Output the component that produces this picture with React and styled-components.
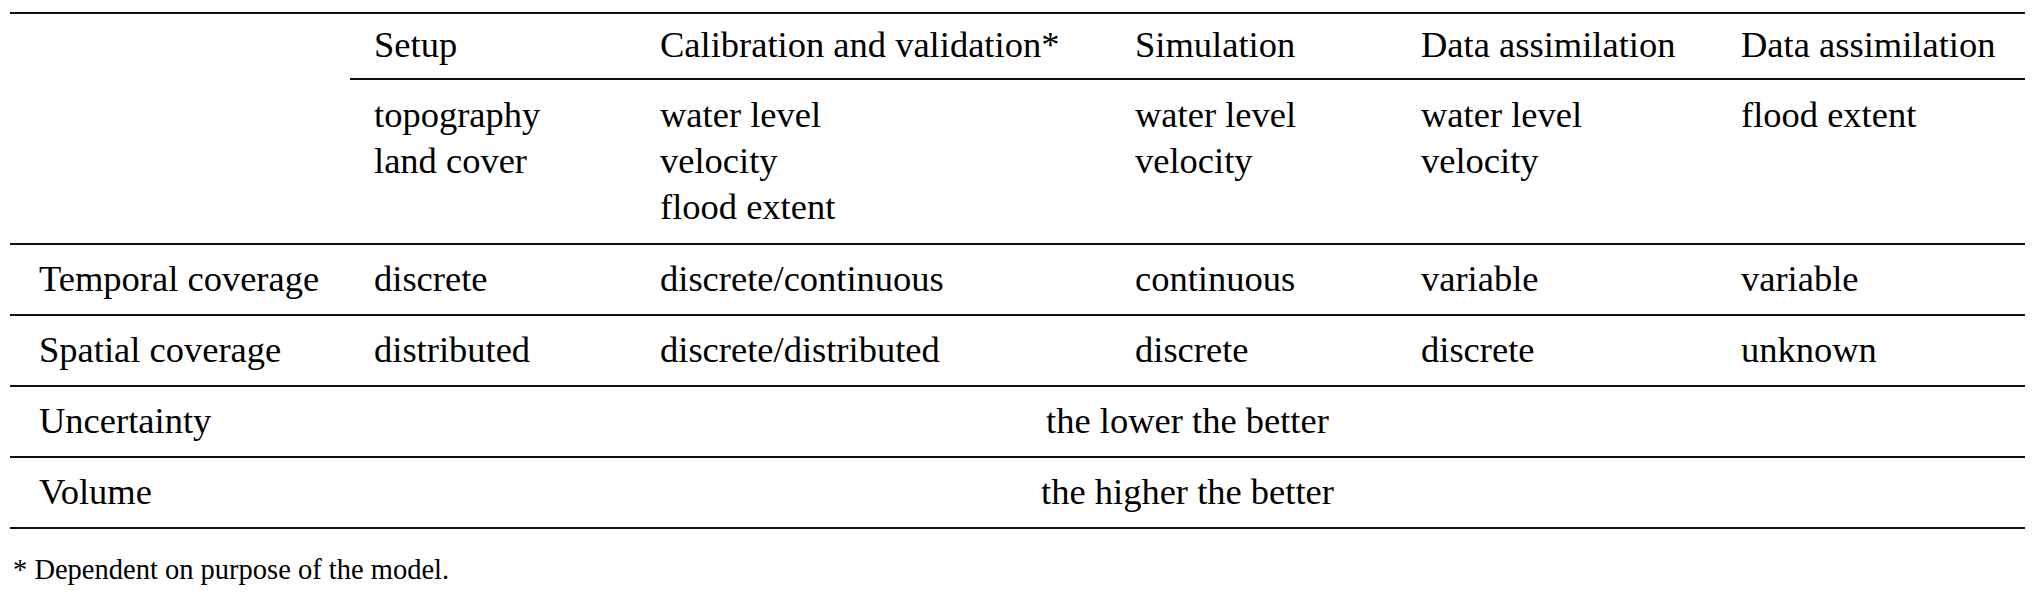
import React from 'react';
import styled, { createGlobalStyle } from 'styled-components';

const GlobalStyle = createGlobalStyle`
    html, body {
        margin: 0;
        padding: 0;
        background: #fff;
    }
    body {
        font-family: "Liberation Serif", "Times New Roman", serif;
        color: #000;
    }
`

const columns = [340, 286, 475, 286, 320, 308];

const headers = [
    'Setup',
    'Calibration and validation*',
    'Simulation',
    'Data assimilation',
    'Data assimilation',
];

const variables = [
    ['topography', 'land cover'],
    ['water level', 'velocity', 'flood extent'],
    ['water level', 'velocity'],
    ['water level', 'velocity'],
    ['flood extent'],
];

const coverage = [
    ['Temporal coverage', 'discrete', 'discrete/continuous', 'continuous', 'variable', 'variable'],
    ['Spatial coverage', 'distributed', 'discrete/distributed', 'discrete', 'discrete', 'unknown'],
];

const spanning = [
    ['Uncertainty', 'the lower the better'],
    ['Volume', 'the higher the better'],
];

const Page = styled.div`
    padding: 12px 7px 0 10px;
`

const Table = styled.table`
    width: 2015px;
    table-layout: fixed;
    border-collapse: collapse;
    border-top: 2px solid #111;
    border-bottom: 2px solid #111;
    font-family: "Liberation Serif", "Times New Roman", serif;
    font-size: 36.5px;
    line-height: 46px;
    color: #000;
`

const HeadCell = styled.th`
    text-align: left;
    font-weight: normal;
    padding: 8px 0 10px 24px;
    white-space: nowrap;
    border-bottom: ${(p) => (p.$ruled ? '2px solid #111' : 'none')};
`

const Row = styled.tr`
    border-bottom: ${(p) => (p.$last ? 'none' : '2px solid #111')};
`

const Cell = styled.td`
    text-align: ${(p) => (p.$center ? 'center' : 'left')};
    vertical-align: top;
    padding: ${(p) => (p.$tall ? '12px 0 13px 24px' : '11px 0 12px 24px')};
    padding-left: ${(p) => (p.$label ? '29px' : p.$center ? '0' : '24px')};
    white-space: nowrap;
`

const Line = styled.div`
    height: 46px;
`

const Footnote = styled.p`
    margin: 24px 0 0 3px;
    font-size: 28.5px;
    line-height: 34px;
`

const App = () => {
    return (
        <>
            <GlobalStyle />
            <Page>
                <Table>
                    <colgroup>
                        {columns.map((w, i) => (
                            <col key={i} style={{ width: w }} />
                        ))}
                    </colgroup>
                    <thead>
                        <tr>
                            <HeadCell />
                            {headers.map((h, i) => (
                                <HeadCell key={i} $ruled>{h}</HeadCell>
                            ))}
                        </tr>
                    </thead>
                    <tbody>
                        <Row>
                            <Cell $label $tall />
                            {variables.map((list, i) => (
                                <Cell key={i} $tall>
                                    {list.map((v) => (
                                        <Line key={v}>{v}</Line>
                                    ))}
                                </Cell>
                            ))}
                        </Row>
                        {coverage.map((r) => (
                            <Row key={r[0]}>
                                {r.map((c, i) => (
                                    <Cell key={i} $label={i === 0}>{c}</Cell>
                                ))}
                            </Row>
                        ))}
                        {spanning.map((r, i) => (
                            <Row key={r[0]} $last={i === spanning.length - 1}>
                                <Cell $label>{r[0]}</Cell>
                                <Cell colSpan={5} $center>{r[1]}</Cell>
                            </Row>
                        ))}
                    </tbody>
                </Table>
                <Footnote>* Dependent on purpose of the model.</Footnote>
            </Page>
        </>
    )
}

export default App
